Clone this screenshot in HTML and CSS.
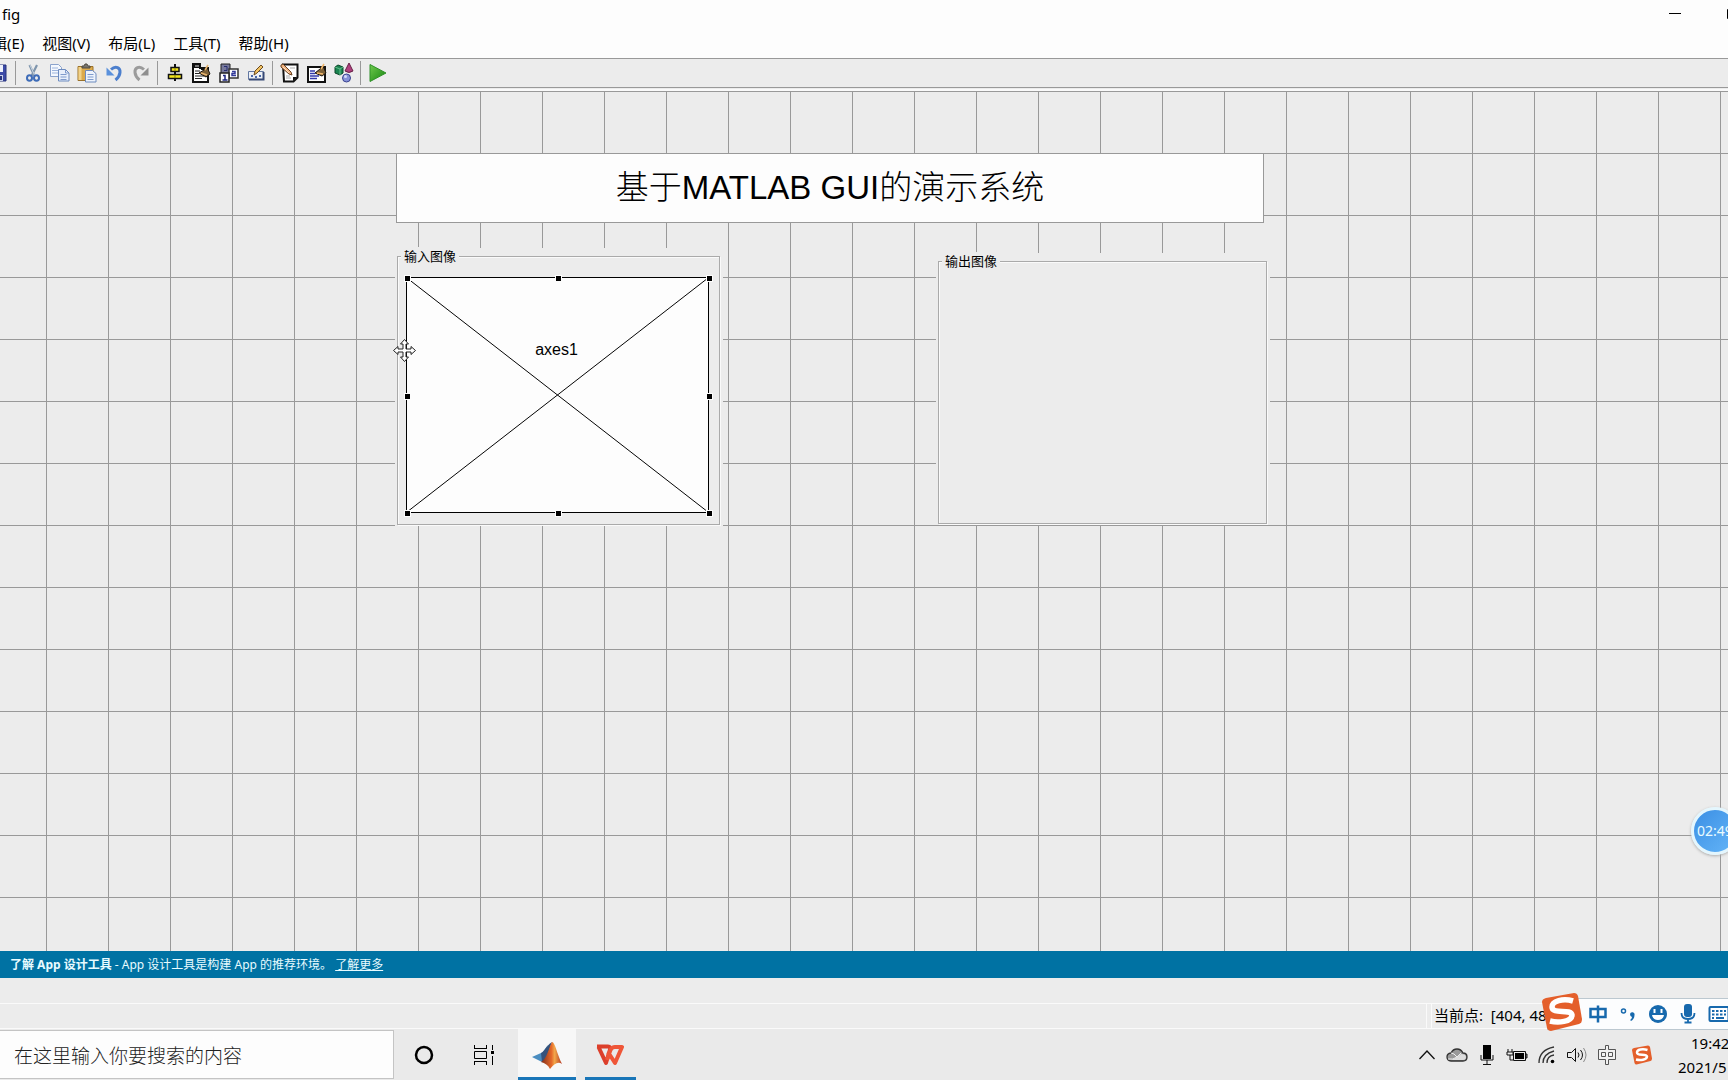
FILE: index.html
```html
<!DOCTYPE html>
<html lang="zh-CN">
<head>
<meta charset="utf-8">
<title>fig</title>
<link rel="stylesheet" href="styles.css">
</head>
<body>
<div class="desktop">
  <header class="titlebar">
    <span class="title">fig</span>
    <div class="window-buttons">
      <button class="win-btn" aria-label="最小化"><svg width="12" height="12"><path d="M0 5.500h12" stroke="#000"/></svg></button>
      <button class="win-btn" aria-label="最大化"><svg width="12" height="12"><path d="M.5 1.500h11v9H.5z" fill="none" stroke="#000"/></svg></button>
    </div>
  </header>
  <nav class="menubar">
    <button class="menu">辑(E)</button>
    <button class="menu">视图(V)</button>
    <button class="menu">布局(L)</button>
    <button class="menu">工具(T)</button>
    <button class="menu">帮助(H)</button>
  </nav>
  <div class="toolbar">
    <button class="tool" aria-label="保存"><svg width="20" height="20" viewBox="0 0 20 20"><path d="M2 2h15v16H4l-2-2z" fill="#3d4ba8" stroke="#27337c"/><path d="M5 2h9v7H5z" fill="#eef1fb"/><path d="M6 12h8v6H6z" fill="#c9cfe8"/><path d="M11 13h2v4h-2z" fill="#27337c"/></svg></button>
    <i class="sep"></i>
    <button class="tool" aria-label="剪切"><svg width="20" height="20" viewBox="0 0 20 20"><path d="M6.500 2l5 11M14 2L8.500 13" stroke="#7f95ad" stroke-width="2.200"/><path d="M7 2l4.500 10" stroke="#c9d5e2"/><ellipse cx="6.500" cy="15" rx="2.500" ry="2.800" fill="none" stroke="#3e6cb8" stroke-width="2"/><ellipse cx="13.500" cy="15" rx="2.500" ry="2.800" fill="none" stroke="#3e6cb8" stroke-width="2"/></svg></button>
    <button class="tool" aria-label="复制"><svg width="20" height="20" viewBox="0 0 20 20"><path d="M.5 1.500h8l3 3v9H.5z" fill="#f4f8fe" stroke="#8ba3cc"/><path d="M2 5h6M2 7.500h6M2 10h6" stroke="#9db4dc"/><path d="M8.500 6.500h7l3.500 3.500v8H8.500z" fill="#e7effb" stroke="#6d8bbf"/><path d="M15.500 6.500V10H19M10.500 11.500h6M10.500 14h6M10.500 16.500h6" fill="none" stroke="#7f9bcc"/></svg></button>
    <button class="tool" aria-label="粘贴"><svg width="20" height="20" viewBox="0 0 20 20"><path d="M1 3.500h15v14H1z" fill="#dcaa4b" stroke="#9b722a"/><path d="M1.500 4h3v13h-3z" fill="#f1d28a"/><path d="M5 5V3h2l1-2h2l1 2h2v2z" fill="#77736a" stroke="#4f4b43"/><path d="M8.500 7.500h7l3.500 3v8.500H8.500z" fill="#edf3fc" stroke="#6d8bbf"/><path d="M10.500 11.500h6M10.500 14h6M10.500 16.500h6" stroke="#7f9bcc"/></svg></button>
    <button class="tool" aria-label="撤销"><svg width="20" height="20" viewBox="0 0 20 20"><path d="M7 6.500C12 2 16.500 5 16 9.500c-.3 3-2 5.500-4.500 7.500" fill="none" stroke="#4c7fcd" stroke-width="3"/><path d="M2.500 4.500v8h8z" fill="#5b91dc"/></svg></button>
    <button class="tool" aria-label="重做"><svg width="20" height="20" viewBox="0 0 20 20"><path d="M13 6.500C8 2 3.500 5 4 9.500c.3 3 2 5.500 4.500 7.500" fill="none" stroke="#9b9b9b" stroke-width="3"/><path d="M17.500 4.500v8h-8z" fill="#8f8f8f"/></svg></button>
    <i class="sep"></i>
    <button class="tool" aria-label="对齐对象"><svg width="20" height="20" viewBox="0 0 20 20"><path d="M10 1v17" stroke="#111" stroke-width="2"/><path d="M6 4.500h8v4H6zM3.500 11.500h13v4h-13z" fill="#f4e61c" stroke="#111" stroke-width="1.500"/><path d="M10 5v3M10 12v3" stroke="#86800d"/></svg></button>
    <button class="tool" aria-label="菜单编辑器"><svg width="20" height="20" viewBox="0 0 20 20"><path d="M1 1h7v4h8v14H1z" fill="#fff" stroke="#111" stroke-width="2"/><path d="M1 1h8v4H1zM9 4h8v3H9z" fill="#111"/><path d="M3 3h4" stroke="#ddd"/><path d="M3 8h5M3 10.500h4M3 13h9M3 15.500h7" stroke="#222"/><path d="M7 10l5-3 3-3 3 7-4 3z" fill="#7d6138" stroke="#1b140c"/><path d="M13 7l3-5M9 10l6 2" stroke="#e7b46e" stroke-width="1.500"/></svg></button>
    <button class="tool" aria-label="Tab 键顺序编辑器"><svg width="20" height="20" viewBox="0 0 20 20"><path d="M2 1h9v10H2z" fill="#77799b" stroke="#222"/><path d="M5 3.500h3v4H5" fill="none" stroke="#252c70"/><path d="M10 6h9v9h-9z" fill="#fff" stroke="#333" stroke-width="1.500"/><path d="M1 10h9v9H1z" fill="#fff" stroke="#222" stroke-width="1.500"/><path d="M13 8.500h3v2h-3v2h4" fill="none" stroke="#333b9b" stroke-width="1.500"/><path d="M4 12.500h2v4M3.500 17h5" fill="none" stroke="#1b247f" stroke-width="1.500"/></svg></button>
    <button class="tool" aria-label="工具栏编辑器"><svg width="20" height="20" viewBox="0 0 20 20"><path d="M2.500 8.500h15v8h-15z" fill="#edf1f6" stroke="#6378a2"/><path d="M3 16.500h14.500V9" fill="none" stroke="#354875" stroke-width="2"/><path d="M5 13h2M9 14h2M13 13h2" stroke="#4867a8" stroke-width="2"/><path d="M8 12l1-4 6-6 2 2-6 6z" fill="#f1c464" stroke="#6c4a1f"/></svg></button>
    <i class="sep"></i>
    <button class="tool" aria-label="编辑器"><svg width="20" height="20" viewBox="0 0 20 20"><path d="M3 1.500h14.500v13l-4 4H4z" fill="#fff" stroke="#111" stroke-width="2"/><path d="M17 14h-4v4z" fill="#111"/><path d="M10 5h5M6 13h4M6 15h5" stroke="#aaa"/><path d="M1 2l2-1 8 8 1 3-3-1-8-7z" fill="#f2b37f" stroke="#68401f"/><path d="M3 4l6 6" stroke="#fce1c5"/></svg></button>
    <button class="tool" aria-label="属性检查器"><svg width="20" height="20" viewBox="0 0 20 20"><path d="M1 4h17v15H1z" fill="#fff" stroke="#111" stroke-width="2"/><path d="M3 8h5M3 10.500h5M3 13h9M3 15.500h7" stroke="#333aaa" stroke-width="1.500"/><path d="M8 10l5-4 3-3 3 7-4 3z" fill="#7d6138" stroke="#1b140c"/><path d="M14 6l3-5M10 10l6 1" stroke="#efb66b" stroke-width="1.500"/></svg></button>
    <button class="tool" aria-label="对象浏览器"><svg width="20" height="20" viewBox="0 0 20 20"><path d="M1 4l3-2 5 2v6l-3 2-5-2z" fill="#1b8551" stroke="#0b4528"/><path d="M1 4l5 2 3-2M6 6v6" fill="none" stroke="#62be8b"/><path d="M15 0l4 8q-4 3-8 0z" fill="#b0407e" stroke="#672248"/><circle cx="12.500" cy="15" r="4" fill="#8792d8" stroke="#3a438f"/><circle cx="11.500" cy="13.500" r="1.500" fill="#d6dbf9"/></svg></button>
    <i class="sep"></i>
    <button class="tool" aria-label="运行"><svg width="20" height="20" viewBox="0 0 20 20"><defs><linearGradient id="run" x2="1" y2="1"><stop stop-color="#70ca4e"/><stop offset="1" stop-color="#16850f"/></linearGradient></defs><path d="M2 1.500L18 10 2 18.500z" fill="url(#run)" stroke="#2f9128"/></svg></button>
  </div>
  <main class="canvas">
    <h1 class="static-text">基于MATLAB GUI的演示系统</h1>
    <section class="panel panel-in">
      <h2 class="panel-title">输入图像</h2>
      <div class="axes">
        <svg class="cross" viewBox="0 0 304 236" preserveAspectRatio="none"><path d="M0 0L304 236M304 0L0 236" stroke="#000" fill="none"/></svg>
        <span class="axes-name">axes1</span>
        <i class="handle top left"></i><i class="handle top center"></i><i class="handle top right"></i>
        <i class="handle middle left"></i><i class="handle middle right"></i>
        <i class="handle bottom left"></i><i class="handle bottom center"></i><i class="handle bottom right"></i>
      </div>
    </section>
    <section class="panel panel-out">
      <h2 class="panel-title">输出图像</h2>
    </section>
    <svg class="cursor" width="23" height="23" viewBox="0 0 23 23"><path d="M11.500.5l4 4.500h-2.500v5h5V7.500l4.500 4-4.500 4V13h-5v5h2.500l-4 4.500-4-4.500H10v-5H5v2.500l-4.500-4 4.500-4V10h5V5H7.500z" fill="#fff" stroke="#222"/></svg>
    <div class="timer">02:49</div>
  </main>
  <div class="banner"><p><b>了解 App 设计工具</b> - App 设计工具是构建 App 的推荐环境。 <a href="#more">了解更多</a></p></div>
  <div class="status-gap"></div>
  <div class="statusbar">
    <div class="status-cell grow"></div>
    <div class="status-cell point">当前点:&nbsp; [404, 48</div>
    <div class="ime">
      <svg class="ime-logo" width="40" height="38" viewBox="0 0 40 38"><path d="M4 5L32 0q3 0 4 3l4 23q0 4-3 5L9 38q-3 0-4-3L0 9q0-3 4-4z" fill="#e45f2b"/><path d="M31 8C21 5 10 8 10 14c0 8 19 1 20 8 0 7-14 8-22 6" fill="none" stroke="#fff" stroke-width="5.500"/></svg>
      <button aria-label="中文输入"><svg width="20" height="20" viewBox="0 0 20 20"><path d="M2.500 5h15v8h-15zM10 1.500v17" fill="none" stroke="#1769ad" stroke-width="2.500"/></svg></button>
      <button aria-label="标点"><svg width="20" height="20" viewBox="0 0 20 20"><circle cx="5.500" cy="7" r="2" fill="none" stroke="#1769ad" stroke-width="1.500"/><path d="M12 10a2.300 2.300 0 1 1 4.500 1c0 3-1.500 5-3.500 6l-.8-1q1.800-1.500 1.800-3Q12 12.500 12 10z" fill="#1769ad"/></svg></button>
      <button aria-label="表情"><svg width="20" height="20" viewBox="0 0 20 20"><circle cx="10" cy="10" r="9" fill="#1769ad"/><path d="M6.500 5v4M13.500 5v4" stroke="#fff" stroke-width="2"/><path d="M4 11h12q-1 5-6 5t-6-5z" fill="#fff"/></svg></button>
      <button aria-label="语音"><svg width="20" height="20" viewBox="0 0 20 20"><rect x="6" y="0" width="8" height="13" rx="3" fill="#1769ad"/><path d="M3.500 9q0 6 6.500 6t6.500-6M10 15v4M6.500 18.500h7" fill="none" stroke="#1769ad" stroke-width="1.800"/></svg></button>
      <button aria-label="软键盘"><svg width="20" height="20" viewBox="0 0 20 20"><rect x="1.500" y="3" width="19" height="14" rx="1" fill="#fff" stroke="#1769ad" stroke-width="2"/><path d="M4 7h14M4 10.500h14" stroke="#1769ad" stroke-width="2" stroke-dasharray="2.500 1.500"/><path d="M4 14h2M8 14h8" stroke="#1769ad" stroke-width="2"/></svg></button>
    </div>
  </div>
  <footer class="taskbar">
    <input class="search" type="text" aria-label="搜索" placeholder="在这里输入你要搜索的内容">
    <div class="apps">
      <button class="app" aria-label="Cortana"><svg width="20" height="20"><circle cx="10" cy="10" r="8" fill="none" stroke="#000" stroke-width="2.500"/></svg></button>
      <button class="app" aria-label="任务视图"><svg width="22" height="20" viewBox="0 0 22 20"><path d="M1.500 0v4M13.500 0v4M1.500 3.500h12M1.500 20v-4M13.500 20v-4M1.500 16.500h12M1.500 6.500h12v7H1.500zM19.500 0v5M19.500 11v9" fill="none" stroke="#000"/><path d="M18 6h3v3h-3z"/></svg></button>
      <button class="app active" aria-label="MATLAB"><svg width="30" height="28" viewBox="0 0 30 28"><defs><linearGradient id="mat"><stop stop-color="#7c2c19"/><stop offset=".5" stop-color="#e5692b"/><stop offset=".65" stop-color="#f2a84b"/><stop offset="1" stop-color="#b43620"/></linearGradient></defs><path d="M0 16l9-4c3-1 4-5 7-8l-6 17-4-2z" fill="#4a8dc0"/><path d="M9 12c3-1 5-7 11-11l-6 18-4 2z" fill="#35527b"/><path d="M20 1c3 0 5 12 10 22-4-3-8 0-12 5-2-4-5-6-9-7 6-3 8-15 11-20z" fill="url(#mat)"/></svg></button>
      <button class="app running" aria-label="WPS Office"><svg width="28" height="22" viewBox="0 0 28 22"><path d="M1 2.500h11q3 0 2 3L10 19 2.500 3" fill="none" stroke="#dc3f2b" stroke-width="4" stroke-linejoin="round"/><path d="M12 8l7 11 7-16h-7c-5 0-5 5-8 13" fill="none" stroke="#ef5638" stroke-width="4" stroke-linejoin="round"/></svg></button>
    </div>
    <div class="tray">
      <svg width="20" height="20" viewBox="0 0 20 20"><path d="M2.500 14L10 6l7.500 8" fill="none" stroke="#111" stroke-width="1.300"/></svg>
      <svg width="22" height="20" viewBox="0 0 22 20"><path d="M5 16q-4-.5-4-4t4-4q2-4 6-4t6 4q4 0 4 4t-4 4z" fill="#999" stroke="#333" stroke-width="1.300"/><path d="M5 8q3 0 6 4l4-4M2 14q5 1 9-2" fill="none" stroke="#eee"/><path d="M11 12l4-3q5 0 5 3t-3 3H5z" fill="#ddd"/></svg>
      <svg width="20" height="20" viewBox="0 0 20 20"><path d="M6 0h8v14H6z"/><path d="M4 10v5h12v-5M10 15v4M6 19.500h8" fill="none" stroke="#111"/></svg>
      <svg width="22" height="20" viewBox="0 0 22 20"><path d="M2 4v3M6 4v3M1 7h6v3H1zM4 10v5h3" fill="none" stroke="#111"/><path d="M7.500 6.500h12v9h-12zM20 9h1v4h-1z" fill="none" stroke="#111"/><path d="M9 8h9v6H9z"/></svg>
      <svg width="20" height="20" viewBox="0 0 20 20"><path d="M2 18Q2 5 17 2M6 18Q6 9 17 6M10 18q0-7 7-8" fill="none" stroke="#333" stroke-width="1.300"/><circle cx="15.500" cy="16.500" r="1.800"/></svg>
      <svg width="22" height="20" viewBox="0 0 22 20"><path d="M1.500 7.500h4l4-4v13l-4-4h-4z" fill="none" stroke="#111"/><path d="M12 7.500q2 2.500 0 5M14.500 5q4 5 0 10" fill="none" stroke="#111"/><path d="M17.500 3q5 7 0 14" fill="none" stroke="#888"/></svg>
      <svg width="20" height="20" viewBox="0 0 20 20"><path d="M1.500 4.500h7v-4h3v4h7v10h-7v5h-3v-5h-7zM4.500 7.500h4v4h-4zM11.500 7.500h4v4h-4z" fill="#f2f2f2" stroke="#555"/></svg>
      <svg class="sogou" width="20" height="20" viewBox="0 0 40 38"><path d="M4 5L32 0q3 0 4 3l4 23q0 4-3 5L9 38q-3 0-4-3L0 9q0-3 4-4z" fill="#e45f2b"/><path d="M31 9C21 6 10 8 10 14c0 8 19 1 20 8 0 7-14 8-22 6" fill="none" stroke="#fff" stroke-width="5"/></svg>
    </div>
    <div class="clock"><span>19:42</span><span>2021/5</span></div>
  </footer>
</div>
</body>
</html>
```
FILE: styles.css
```css
* { box-sizing: border-box; }
body {
  margin: 0;
  background: #ececec;
  color: #000;
  font-family: "Noto Sans", "Noto Sans CJK SC", sans-serif;
  overflow: hidden;
}
button { padding: 0; border: 0; background: none; color: inherit; font: inherit; }
svg { display: block; flex: none; }
.desktop { display: flex; flex-direction: column; min-height: 100vh; }

.titlebar { display: flex; justify-content: space-between; height: 28px; background: #fdfdfd; }
.title { padding-left: 2px; font-size: 15px; line-height: 28px; }
.window-buttons { display: flex; gap: 46px; align-items: center; margin-right: -11px; }
.win-btn { width: 12px; }

.menubar {
  display: flex;
  gap: 18px;
  height: 31px;
  margin-left: -8px;
  background: #fdfdfd;
  border-bottom: 1px solid #999;
  font-size: 15px;
  line-height: 31px;
}
.menu { white-space: nowrap; }

.toolbar {
  display: flex;
  align-items: center;
  height: 29px;
  padding-right: 14px;
  margin-left: -15px;
  border-bottom: 1px solid #999;
}
.tool { display: grid; place-items: center; width: 27px; height: 27px; }
.sep { width: 7px; height: 24px; background: linear-gradient(#999, #999) 3px 0 / 1px 100% no-repeat; }

.canvas {
  position: relative;
  flex: 1;
  margin-top: 3px;
  border-top: 1px solid #999;
  background:
    linear-gradient(90deg, #999 1px, transparent 1px) 46px 0 / 62px 62px,
    linear-gradient(#999 1px, transparent 1px) 0 -1px / 62px 62px,
    #ececec;
  box-shadow: 0 -2px #fafafa;
}
.static-text {
  position: absolute;
  left: 396px;
  top: 61px;
  width: 868px;
  height: 70px;
  margin: 0;
  border: 1px solid #999;
  background: #fdfdfd;
  font: 300 33px/68px "Liberation Sans", "Noto Sans CJK SC", sans-serif;
  text-align: center;
}
.panel { position: absolute; padding: 8px 3px 3px 2px; background: #ececec; }
.panel::before {
  content: "";
  display: block;
  height: 100%;
  border: 1px solid #aaa;
  box-shadow: 1px 1px #fafafa, inset 1px 1px #fafafa;
}
.panel-in { left: 395px; top: 156px; width: 328px; height: 278px; }
.panel-out { left: 936px; top: 161px; width: 334px; height: 272px; }
.panel-title {
  position: absolute;
  left: 6px;
  top: -1px;
  margin: 0;
  padding: 0 3px;
  background: #ececec;
  font: 400 13px/18px "Noto Sans CJK SC", sans-serif;
}
.axes {
  position: absolute;
  left: 11px;
  top: 29px;
  width: 303px;
  height: 236px;
  border: 1px solid #000;
  background: #fdfdfd;
}
.cross { width: 100%; height: 100%; }
.axes-name {
  position: absolute;
  inset: 62px 0 auto;
  padding-right: 2px;
  font: 16px/20px "Liberation Sans", sans-serif;
  text-align: center;
}
.handle { position: absolute; width: 7px; height: 7px; border: 1px solid #fdfdfd; background: #000; }
.handle.top { top: -3px; }
.handle.middle { top: 115px; }
.handle.bottom { bottom: -5px; }
.handle.left { left: -3px; }
.handle.center { left: 148px; }
.handle.right { right: -5px; }
.cursor { position: absolute; left: 393px; top: 247px; }
.timer {
  position: absolute;
  right: -11px;
  top: 715px;
  width: 48px;
  height: 48px;
  border: 3px solid #e4f6fd;
  border-radius: 50%;
  background: linear-gradient(135deg, #3b8fe4, #64b5f8);
  box-shadow: 0 1px 3px #aaa;
  color: #e9fbff;
  font-size: 14px;
  line-height: 42px;
  text-align: center;
}

.banner { height: 27px; background: #0072a3; color: #e8fbff; font-size: 12px; line-height: 27px; }
.banner p { margin: 0; padding-left: 10px; }
.banner a { color: inherit; }
.status-gap { height: 25px; }
.statusbar {
  position: relative;
  display: flex;
  gap: 4px;
  height: 26px;
  border-top: 1px solid #fafafa;
  border-bottom: 1px solid #fafafa;
}
.status-cell { border-right: 1px solid #fafafa; }
.grow { flex: 1; }
.point {
  width: 297px;
  padding-left: 2px;
  border-left: 1px solid #fafafa;
  font-size: 15px;
  line-height: 22px;
  white-space: nowrap;
}
.ime {
  position: absolute;
  right: -3px;
  top: -6px;
  display: flex;
  gap: 10px;
  align-items: center;
  width: 184px;
  height: 32px;
  padding-left: 40px;
  border: 1px solid #bcc8d0;
  background: #fcfdfe;
}
.ime-logo { position: absolute; left: -6px; top: -6px; }

.taskbar { display: flex; align-items: stretch; height: 51px; background: #eaeaea; }
.search {
  width: 394px;
  margin: 1px 0;
  padding: 0 14px;
  border: 1px solid #c4c4c4;
  border-left: 0;
  background: #fdfdfd;
  font: 300 19px "Noto Sans CJK SC", sans-serif;
}
.search::placeholder { color: #222; opacity: 1; }
.apps { display: flex; flex: 1; padding-left: 1px; }
.app { display: grid; place-items: center; width: 58px; padding-top: 3px; border-bottom: 3px solid transparent; }
.app:nth-child(2) { width: 62px; }
.app.active { margin-left: 3px; border-color: #1976b8; background: #f7f7f7; }
.app.running { width: 51px; margin-left: 9px; padding-right: 2px; border-color: #1976b8; }
.tray { display: flex; gap: 9px; align-items: center; }
.sogou { margin-left: 6px; }
.clock {
  display: flex;
  flex-direction: column;
  justify-content: center;
  width: 76px;
  padding-left: 26px;
  font-size: 15px;
  line-height: 24px;
  white-space: nowrap;
}
.clock span:first-child { padding-left: 13px; }
```
